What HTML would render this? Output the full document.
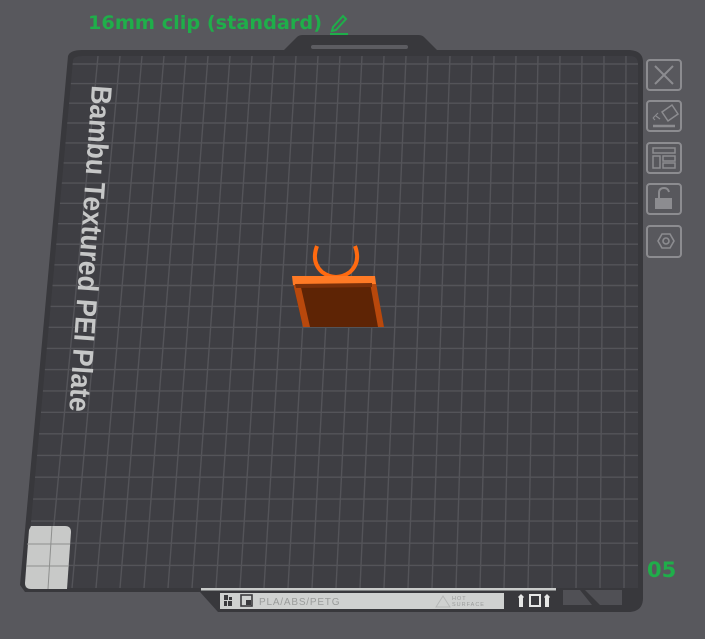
<!DOCTYPE html>
<html><head><meta charset="utf-8"><style>
html,body{margin:0;padding:0;background:#58585d;width:705px;height:639px;overflow:hidden}
svg{display:block}
</style></head><body>
<svg width="705" height="639" viewBox="0 0 705 639" xmlns="http://www.w3.org/2000/svg">
<defs>
<clipPath id="pc"><path d="M83,56 L630,56 Q638,56 638,64 L638,588 L25,588 L73,60 Q74,56 83,56 Z"/></clipPath>
</defs>
<text x="88" y="29" font-family="DejaVu Sans, sans-serif" font-weight="bold" font-size="19" fill="#1fae4a" textLength="234" lengthAdjust="spacingAndGlyphs">16mm clip (standard)</text>
<g stroke="#1fae4a" stroke-width="2" fill="none"><path d="M333,27 L343,16 L346,19 L336,30 L332,31 Z"/><line x1="330" y1="34" x2="348" y2="34"/></g>
<path d="M82,50 L284,50 L297,37 Q299,35 303,35 L418,35 Q422,35 424,37 L437,50 L630,50 Q643,51 643,62 L643,598 Q643,612 628,612 L218,612 L200,592 L25,592 L20,585 L68,56 Q70,50 82,50 Z" fill="#38383c"/>
<rect x="311" y="45" width="97" height="4" rx="2" fill="#5c5c61"/>
<path d="M83,56 L630,56 Q638,56 638,64 L638,588 L25,588 L73,60 Q74,56 83,56 Z" fill="#3e3e43"/>
<g clip-path="url(#pc)" stroke="#545459" stroke-width="1.4">
<line x1="20" y1="64" x2="640" y2="64"/><line x1="20" y1="83.6" x2="640" y2="83.6"/><line x1="20" y1="103.2" x2="640" y2="103.2"/><line x1="20" y1="123" x2="640" y2="123"/><line x1="20" y1="142.9" x2="640" y2="142.9"/><line x1="20" y1="162.9" x2="640" y2="162.9"/><line x1="20" y1="183.1" x2="640" y2="183.1"/><line x1="20" y1="203.3" x2="640" y2="203.3"/><line x1="20" y1="223.7" x2="640" y2="223.7"/><line x1="20" y1="244.2" x2="640" y2="244.2"/><line x1="20" y1="264.8" x2="640" y2="264.8"/><line x1="20" y1="285.5" x2="640" y2="285.5"/><line x1="20" y1="306.4" x2="640" y2="306.4"/><line x1="20" y1="327.3" x2="640" y2="327.3"/><line x1="20" y1="348.4" x2="640" y2="348.4"/><line x1="20" y1="369.6" x2="640" y2="369.6"/><line x1="20" y1="390.9" x2="640" y2="390.9"/><line x1="20" y1="412.3" x2="640" y2="412.3"/><line x1="20" y1="433.8" x2="640" y2="433.8"/><line x1="20" y1="455.4" x2="640" y2="455.4"/><line x1="20" y1="477.2" x2="640" y2="477.2"/><line x1="20" y1="499.1" x2="640" y2="499.1"/><line x1="20" y1="521.1" x2="640" y2="521.1"/><line x1="20" y1="543.2" x2="640" y2="543.2"/><line x1="20" y1="565.4" x2="640" y2="565.4"/>
<line x1="626" y1="56" x2="624" y2="588"/><line x1="604" y1="56" x2="600" y2="588"/><line x1="582" y1="56" x2="576" y2="588"/><line x1="560" y1="56" x2="552" y2="588"/><line x1="538" y1="56" x2="528" y2="588"/><line x1="516" y1="56" x2="504" y2="588"/><line x1="494" y1="56" x2="480" y2="588"/><line x1="472" y1="56" x2="456" y2="588"/><line x1="450" y1="56" x2="432" y2="588"/><line x1="428" y1="56" x2="408" y2="588"/><line x1="406" y1="56" x2="384" y2="588"/><line x1="384" y1="56" x2="360" y2="588"/><line x1="362" y1="56" x2="336" y2="588"/><line x1="340" y1="56" x2="312" y2="588"/><line x1="318" y1="56" x2="288" y2="588"/><line x1="296" y1="56" x2="264" y2="588"/><line x1="274" y1="56" x2="240" y2="588"/><line x1="252" y1="56" x2="216" y2="588"/><line x1="230" y1="56" x2="192" y2="588"/><line x1="208" y1="56" x2="168" y2="588"/><line x1="186" y1="56" x2="144" y2="588"/><line x1="164" y1="56" x2="120" y2="588"/><line x1="142" y1="56" x2="96" y2="588"/><line x1="120" y1="56" x2="72" y2="588"/><line x1="98" y1="56" x2="48" y2="588"/>
</g>
<path d="M31,526 L65,526 Q71,526 71,532 L67,589 L31,589 Q25,589 25,583 L29,530 Z" fill="#c8c9c8"/>
<g stroke="#8e8f8e" stroke-width="1"><line x1="52" y1="526" x2="48" y2="589"/><line x1="27" y1="544" x2="70" y2="544"/><line x1="26" y1="566" x2="69" y2="566"/></g>
<text transform="translate(92,85) rotate(94)" font-family="Liberation Sans, sans-serif" font-weight="bold" font-size="29" fill="#c6c7c7" textLength="327" lengthAdjust="spacingAndGlyphs">Bambu Textured PEI Plate</text>
<rect x="201" y="588" width="355" height="2.5" fill="#c9cbca"/>
<rect x="220" y="593" width="284" height="16" fill="#cfd1d0"/>
<g fill="#3a3a3d"><rect x="224" y="595" width="4" height="5"/><rect x="229" y="597" width="3" height="3"/><rect x="224" y="601" width="3" height="5"/><rect x="228" y="601" width="4" height="5"/><rect x="241" y="595" width="11" height="11" fill="none" stroke="#3a3a3d" stroke-width="1.6"/><rect x="246" y="600" width="5" height="5"/></g>
<text x="259" y="605" font-family="Liberation Sans, sans-serif" font-size="10" fill="#9a9c9b" letter-spacing="0.8">PLA/ABS/PETG</text>
<path d="M436,607 L443,596 L450,607 Z" fill="none" stroke="#b5b7b6" stroke-width="1"/>
<text x="452" y="600" font-family="Liberation Sans, sans-serif" font-size="5.5" fill="#9a9c9b" letter-spacing="1">HOT</text>
<text x="452" y="606" font-family="Liberation Sans, sans-serif" font-size="5.5" fill="#9a9c9b" letter-spacing="1">SURFACE</text>
<g fill="#e6e7e6"><path d="M518,597 L521,594 L524,597 L523,598 L523,607 L519,607 L519,598 Z"/><rect x="530" y="595" width="10" height="11" fill="none" stroke="#e6e7e6" stroke-width="2"/><path d="M544,597 L547,594 L550,597 L549,598 L549,607 L545,607 L545,598 Z"/></g>
<path d="M563,590 L580,590 L592,605 L563,605 Z" fill="#505055"/>
<path d="M585,590 L622,590 L622,605 L600,605 Z" fill="#505055"/>
<g fill="none" stroke="#8c8c90" stroke-width="2">
<rect x="647" y="60" width="34" height="30" rx="3"/>
<rect x="647" y="101" width="34" height="30" rx="3"/>
<rect x="647" y="143" width="34" height="30" rx="3"/>
<rect x="647" y="184" width="34" height="30" rx="3"/>
<rect x="647" y="226" width="34" height="31" rx="3"/>
<path d="M655,66 L673,84 M673,66 L655,84"/>
<path d="M653,126 L675,126" stroke-width="2.5"/>
<path d="M662,112 L672,105 L678,114 L668,121 Z" stroke-width="1.5"/>
<path d="M653,118 L658,113 M653,118 L655,120 M656,116 L660,119" stroke-width="1.2"/>
<rect x="653" y="148" width="22" height="5" stroke-width="1.5"/><rect x="653" y="156" width="7" height="12" stroke-width="1.5"/><rect x="663" y="156" width="12" height="5" stroke-width="1.5"/><rect x="663" y="163" width="12" height="5" stroke-width="1.5"/>
<path d="M659,198 L659,193 Q659,188 664,188 Q668,188 669,192" stroke-width="2"/>
<path d="M658,241 L662,234 L670,234 L674,241 L670,248 L662,248 Z" stroke-width="1.6"/>
<circle cx="666" cy="241" r="3" stroke-width="1.6"/>
</g>
<rect x="655" y="198" width="17" height="11" fill="#8c8c90"/>
<text x="647" y="577" font-family="DejaVu Sans, sans-serif" font-weight="bold" font-size="21" fill="#1fae4a">05</text>
<path d="M317,246 Q311,262 322,272 Q336,282 350,272 Q361,262 355,246" fill="none" stroke="#ff6a10" stroke-width="4"/>
<path d="M293,283 L375,283 L384,327 L303,327 Z" fill="#5e2405"/>
<path d="M293,283 L300,283 L310,327 L303,327 Z" fill="#b8480c"/>
<path d="M370,283 L376,283 L384,327 L378,327 Z" fill="#b8480c"/>
<path d="M292,276 L375,276 L376,284 L293,285 Z" fill="#ff7a25"/>
<path d="M295,284 L372,283 L372,287 L296,288 Z" fill="#7a300a"/>
</svg>
</body></html>
